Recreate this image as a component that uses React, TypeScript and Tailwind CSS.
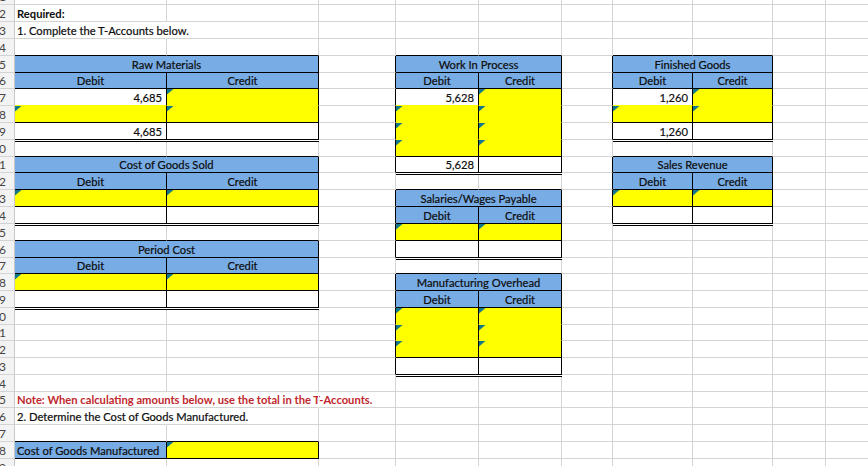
import React from 'react';

type C = {
  fill?: 'b' | 'y';
  text?: string;
  align?: 'l' | 'c' | 'r';
  bold?: boolean;
  red?: boolean;
  tri?: boolean;
  span?: number;
  skip?: boolean;
  rb?: boolean;
  bb?: boolean;
  tot?: boolean;
  hideR?: boolean;
};

const HEIGHTS = [17, 17, 17, 17, 16, 17, 17, 17, 17, 16, 17, 17, 17, 17, 17, 16, 17, 17, 17, 16, 17, 17, 17, 16, 17, 17, 17];
const NCOL = 10;

const W: Record<string, string> = {
  '0-1': 'w-[152px]',
  '1-1': 'w-[152px]',
  '2-1': 'w-[77px]',
  '3-1': 'w-[83px]',
  '4-1': 'w-[83px]',
  '5-1': 'w-[51px]',
  '6-1': 'w-[80px]',
  '7-1': 'w-[80px]',
  '8-1': 'w-[53px]',
  '9-1': 'w-[60px]',
  '0-2': 'w-[304px]',
  '3-2': 'w-[166px]',
  '6-2': 'w-[160px]',
};

function build(): C[][] {
  const g: C[][] = HEIGHTS.map(() => Array.from({ length: NCOL }, () => ({} as C)));
  const T = (col: number, hr: number, title: string, data: (string | null)[][], total: [string, string]) => {
    g[hr - 1][col].bb = true;
    g[hr - 1][col + 1].bb = true;
    const n = 2 + data.length + 1;
    for (let r = hr; r < hr + n; r++) if (col > 0) g[r][col - 1].rb = true;
    g[hr][col] = { fill: 'b', text: title, align: 'c', span: 2, rb: true, bb: true };
    g[hr][col + 1] = { skip: true };
    g[hr + 1][col] = { fill: 'b', text: 'Debit', align: 'c', rb: true, bb: true };
    g[hr + 1][col + 1] = { fill: 'b', text: 'Credit', align: 'c', rb: true, bb: true };
    data.forEach((row, k) => {
      const r = hr + 2 + k;
      row.forEach((v, j) => {
        g[r][col + j] = v === null ? { fill: 'y', tri: true, rb: true } : { text: v, align: 'r', rb: true };
        if (k === data.length - 1) g[r][col + j].bb = true;
      });
    });
    const tr = hr + 2 + data.length;
    g[tr][col] = { text: total[0], align: 'r', rb: true, tot: true, bb: true };
    g[tr][col + 1] = { text: total[1], align: 'r', rb: true, tot: true, bb: true };
  };

  g[0][0] = { text: 'Required:', bold: true, align: 'l' };
  g[1][0] = { text: '1. Complete the T-Accounts below.', align: 'l', hideR: true };

  T(0, 3, 'Raw Materials', [['4,685', null], [null, null]], ['4,685', '']);
  T(3, 3, 'Work In Process', [['5,628', null], [null, null], [null, null], [null, null]], ['5,628', '']);
  T(6, 3, 'Finished Goods', [['1,260', null], [null, null]], ['1,260', '']);
  T(0, 9, 'Cost of Goods Sold', [[null, null]], ['', '']);
  T(6, 9, 'Sales Revenue', [[null, null]], ['', '']);
  T(3, 11, 'Salaries/Wages Payable', [[null, null]], ['', '']);
  T(0, 14, 'Period Cost', [[null, null]], ['', '']);
  T(3, 16, 'Manufacturing Overhead', [[null, null], [null, null], [null, null]], ['', '']);

  g[23][0] = { text: 'Note: When calculating amounts below, use the total in the T-Accounts.', bold: true, red: true, align: 'l', hideR: true };
  g[23][1] = { hideR: true };
  g[24][0] = { text: '2. Determine the Cost of Goods Manufactured.', align: 'l', hideR: true };
  g[25][0].bb = true;
  g[25][1].bb = true;
  g[26][0] = { fill: 'b', text: 'Cost of Goods Manufactured', align: 'l', rb: true, bb: true };
  g[26][1] = { fill: 'y', tri: true, rb: true, bb: true };
  return g;
}

function Tri() {
  return (
    <svg className="absolute left-0 top-0" width="7" height="6" viewBox="0 0 7 6">
      <polygon points="0,0 6.5,0 0,5.5" fill="#12788a" />
    </svg>
  );
}

function RowHeader({ n }: { n: number }) {
  return (
    <div className="w-[15px] h-full shrink-0 overflow-hidden flex items-end justify-end pr-[8px] bg-[#f3f3f3] border-r border-b border-r-[#c8c8c8] border-b-[#d4d4d4] text-[#444] text-[12px]">
      <span className="leading-[15px] whitespace-nowrap">{n}</span>
    </div>
  );
}

function EmptyRow({ n }: { n: number }) {
  const cols = [0, 1, 2, 3, 4, 5, 6, 7, 8, 9];
  return (
    <div className="flex h-[17px] shrink-0">
      <RowHeader n={n} />
      {cols.map((c) => (
        <div key={c} className={`${W[`${c}-1`]} h-full shrink-0 border-r border-b border-r-[#d4d4d4] border-b-[#d4d4d4]`} />
      ))}
    </div>
  );
}

export default function App() {
  const g = build();
  return (
    <div className="w-[868px] h-[466px] overflow-hidden bg-white text-[11.2px] text-[#0d0d0d]" style={{ fontFamily: 'Lato, "Open Sans", sans-serif' }}>
      <div className="h-[5px] overflow-hidden flex flex-col justify-end">
        <EmptyRow n={11} />
      </div>
      {g.map((row, i) => {
        const h = HEIGHTS[i] === 17 ? 'h-[17px]' : 'h-[16px]';
        return (
          <div key={i} className={`flex ${h}`}>
            <RowHeader n={12 + i} />
            {row.map((c, j) => {
              if (c.skip) return null;
              const span = c.span || 1;
              const below = i + 1 < g.length ? g[i + 1][j] : undefined;
              const belowY = below && below.fill === 'y';
              const fill = c.fill === 'b' ? 'bg-[#78ace4]' : c.fill === 'y' ? 'bg-[#ffff00]' : '';
              const rc = c.rb
                ? 'border-r-black'
                : c.hideR
                ? 'border-r-white'
                : c.fill === 'y'
                ? 'border-r-[#ffff00]'
                : 'border-r-[#d4d4d4]';
              const bc = c.bb
                ? 'border-b-black'
                : c.fill === 'y' || belowY
                ? 'border-b-[#ffff00]'
                : 'border-b-[#d4d4d4]';
              const al =
                c.align === 'c' ? 'justify-center' : c.align === 'r' ? 'justify-end pr-[4px]' : 'justify-start pl-[2px]';
              const tot = c.tot ? 'z-[1] shadow-[0_1px_0_0_#fff,0_2px_0_0_#000]' : '';
              return (
                <div
                  key={j}
                  className={`${W[`${j}-${span}`]} relative h-full shrink-0 flex items-end border-r border-b ${rc} ${bc} ${fill} ${al} ${tot}`}
                >
                  {c.tri && <Tri />}
                  {c.text && (
                    <span
                      className={`leading-[15px] whitespace-nowrap ${c.bold ? 'font-bold' : '[-webkit-text-stroke:0.2px_currentColor]'} ${c.red ? 'text-[#c0272d]' : ''}`}
                    >
                      {c.text}
                    </span>
                  )}
                </div>
              );
            })}
          </div>
        );
      })}
      <div className="h-[8px] overflow-hidden">
        <EmptyRow n={39} />
      </div>
    </div>
  );
}
